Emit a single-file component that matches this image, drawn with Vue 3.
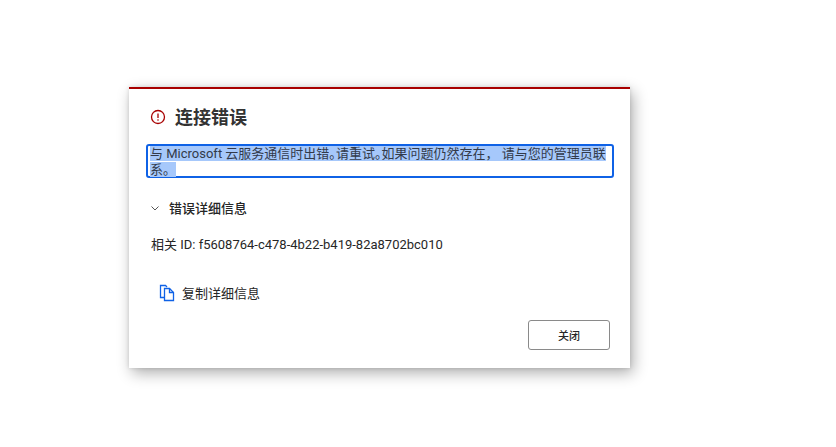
<script setup>
const correlationId = 'f5608764-c478-4b22-b419-82a8702bc010'
</script>

<template>
  <div class="page">
    <section class="dialog">
      <header class="title">
        <svg class="err" width="16" height="16" viewBox="0 0 16 16">
          <circle cx="8" cy="8" r="6.5" fill="none" stroke="#a80000" stroke-width="1.3" />
          <path d="M8 4.4v4.6" stroke="#a80000" stroke-width="1.3" fill="none" />
          <circle cx="8" cy="11" r=".8" fill="#a80000" />
        </svg>
        <h1>连接错误</h1>
      </header>
      <p class="message"><span class="sel">与 Microsoft 云服务通信时出错</span><span class="sel stop">。</span><span class="sel">请重试</span><span class="sel stop">。</span><span class="sel">如果问题仍然存在， 请与您的管理员联系。</span></p>
      <div class="details">
        <svg width="10" height="10" viewBox="0 0 10 10">
          <path d="M1.5 3.5 5 7l3.5-3.5" fill="none" stroke="#555" stroke-width="1" />
        </svg>
        <span>错误详细信息</span>
      </div>
      <div class="corr">相关 ID: {{ correlationId }}</div>
      <div class="copy">
        <svg width="16" height="18" viewBox="0 0 16 18">
          <path d="M5.5 13.5H1.5V1.5H6.5L8 3" fill="none" stroke="#0f62e6" stroke-width="1.3" />
          <path d="M5.5 4.5H10.5L14.5 8.5V16.5H5.5Z" fill="none" stroke="#0f62e6" stroke-width="1.3" />
          <path d="M10.5 4.5V8.5H14.5" fill="none" stroke="#0f62e6" stroke-width="1.3" />
        </svg>
        <span>复制详细信息</span>
      </div>
      <footer class="foot">
        <button class="close" type="button">关闭</button>
      </footer>
    </section>
  </div>
</template>

<style>
html, body { margin: 0; background: #fff; }
</style>

<style scoped>
.page {
  width: 836px;
  height: 447px;
  padding: 87px 0 0 129px;
  box-sizing: border-box;
  overflow: hidden;
  font-family: "Noto Sans CJK SC", "Open Sans", sans-serif;
  color: #262626;
}
.dialog {
  width: 501px;
  height: 281px;
  box-sizing: border-box;
  background: #fff;
  border-top: 2px solid #a80000;
  box-shadow: 0 0 4px rgba(0,0,0,.12), 3px 5px 14px rgba(0,0,0,.32);
  padding: 0 20px 0 17px;
  display: flex;
  flex-direction: column;
}
.title {
  display: flex;
  align-items: center;
  gap: 9px;
  height: 55px;
  padding-left: 4px;
}
.title h1 {
  margin: -2px 0 0;
  font-size: 18px;
  font-weight: 700;
  line-height: 24px;
  color: #333;
}
.err { flex: none; }
.message {
  margin: 0;
  width: 468px;
  height: 34px;
  box-sizing: border-box;
  border: 2px solid #0f62e6;
  border-radius: 3px;
  padding: 0 2px;
  font-size: 13px;
  line-height: 16px;
  color: #323a4a;
  font-family: Roboto, "Noto Sans CJK SC", sans-serif;
}
.sel { background: #a6c8fb; }
.stop { font-feature-settings: "halt"; }
.details {
  display: flex;
  align-items: center;
  gap: 9px;
  margin-top: 20px;
  padding-left: 4px;
  font-size: 13px;
  font-weight: 500;
  line-height: 20px;
}
.corr {
  margin-top: 17px;
  padding-left: 5px;
  font-size: 13px;
  line-height: 20px;
  font-family: Roboto, "Noto Sans CJK SC", sans-serif;
}
.copy {
  display: flex;
  align-items: center;
  gap: 7px;
  margin-top: 28px;
  padding-left: 13px;
  font-size: 13px;
  line-height: 20px;
}
.foot {
  display: flex;
  justify-content: flex-end;
  margin-top: 17px;
}
.close {
  width: 82px;
  height: 30px;
  padding: 0;
  background: #fff;
  border: 1px solid #8a8a8a;
  border-radius: 3px;
  font-family: inherit;
  font-size: 11px;
  font-weight: 500;
  color: #262626;
}
</style>
